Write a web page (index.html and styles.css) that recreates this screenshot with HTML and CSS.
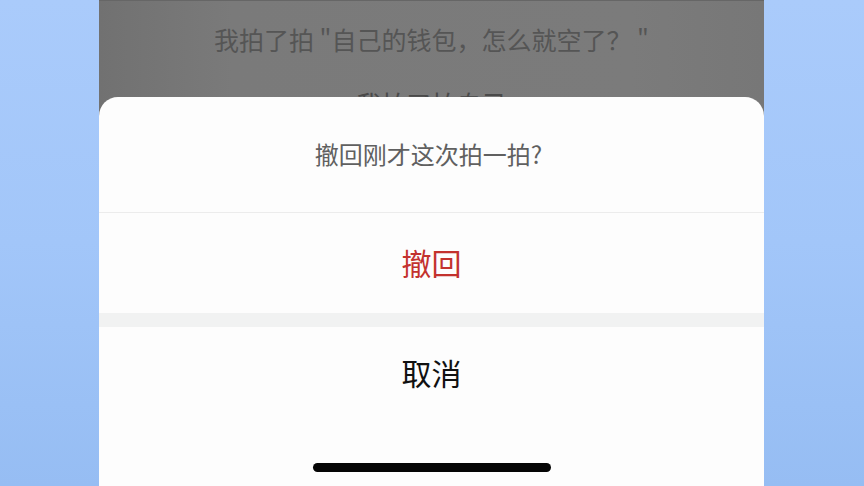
FILE: index.html
```html
<!DOCTYPE html>
<html lang="zh-CN">
<head>
<meta charset="utf-8">
<link rel="stylesheet" href="styles.css">
</head>
<body>
<div class="stage">
  <div class="side"></div>
  <div class="phone">
    <div class="chat">
      <p class="line first">我拍了拍 "自己的钱包，怎么就空了？ "</p>
      <p class="line second">我拍了拍自己</p>
    </div>
    <div class="sheet">
      <div class="title">撤回刚才这次拍一拍?</div>
      <div class="action danger">撤回</div>
      <div class="gap"></div>
      <div class="action cancel">取消</div>
      <div class="home"><span class="bar"></span></div>
    </div>
  </div>
  <div class="side"></div>
</div>
</body>
</html>
```

FILE: styles.css
```css
* { box-sizing: border-box; }
html, body { margin: 0; padding: 0; }
body {
  width: 864px;
  height: 486px;
  overflow: hidden;
  font-family: "Noto Sans CJK SC", "Noto Sans", sans-serif;
  background: linear-gradient(180deg, #aacbfb 0%, #a2c6f9 50%, #96bdf3 100%);
}
.stage {
  display: flex;
  width: 864px;
  height: 486px;
}
.side { flex: 0 0 99px; }
.side:last-child { flex: 0 0 100px; }
.phone {
  flex: 0 0 665px;
  position: relative;
  height: 486px;
  overflow: hidden;
  background: linear-gradient(90deg, #717171 0%, #7a7a7a 20%, #7b7b7b 80%, #777 100%);
  border-top: 1px solid #666;
}
.chat {
  display: flex;
  flex-direction: column;
  align-items: center;
  padding-top: 20px;
}
.line {
  margin: 0;
  color: #555;
  font-size: 25px;
  line-height: 36px;
  white-space: nowrap;
  font-weight: 400;
}
.second {
  margin-top: 28px;
  color: #4a4a4a;
}
.sheet {
  position: absolute;
  left: 0;
  right: 0;
  top: 96px;
  bottom: 0;
  background: #fdfdfd;
  border-radius: 19px 19px 0 0;
  display: flex;
  flex-direction: column;
}
.title {
  height: 116px;
  display: flex;
  align-items: center;
  justify-content: center;
  font-size: 24px;
  font-weight: 400;
  color: #606060;
  border-bottom: 1px solid #ececec;
  padding-bottom: 2px;
  padding-right: 6px;
}
.action {
  height: 100px;
  display: flex;
  align-items: center;
  justify-content: center;
  font-size: 30px;
  font-weight: 400;
}
.danger { color: #c3322e; padding-bottom: 2px; }
.cancel { color: #111; padding-bottom: 10px; }
.gap {
  height: 14px;
  background: #f1f2f2;
}
.home {
  flex: 1;
  display: flex;
  justify-content: center;
  align-items: flex-start;
  padding-top: 36px;
}
.bar {
  width: 238px;
  height: 9px;
  border-radius: 5px;
  background: #050505;
}
```
